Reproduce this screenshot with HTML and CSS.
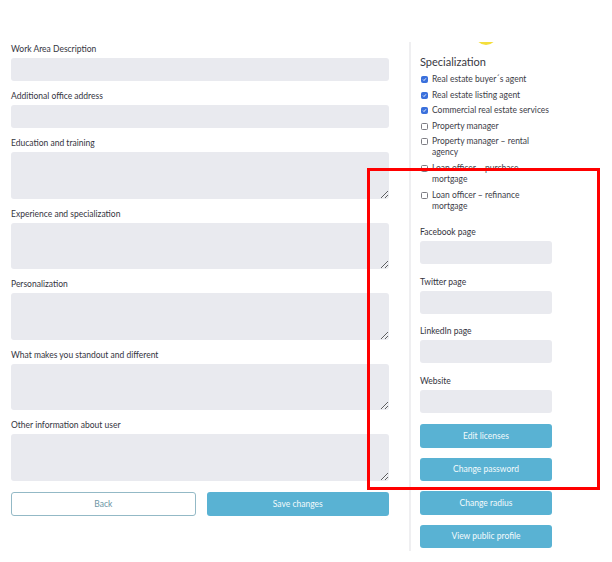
FILE: index.html
```html
<!DOCTYPE html>
<html lang="en">
<head>
    <meta charset="UTF-8">
    <meta name="viewport" content="width=device-width, initial-scale=1.0">
    <title>Edit profile</title>
    <link rel="stylesheet" href="styles.css">
</head>
<body>
    <div class="page">
        <form class="main-form">
            <div class="field">
                <label>Work Area Description</label>
                <input type="text">
            </div>
            <div class="field">
                <label>Additional office address</label>
                <input type="text">
            </div>
            <div class="field">
                <label>Education and training</label>
                <textarea></textarea>
            </div>
            <div class="field">
                <label>Experience and specialization</label>
                <textarea></textarea>
            </div>
            <div class="field">
                <label>Personalization</label>
                <textarea></textarea>
            </div>
            <div class="field">
                <label>What makes you standout and different</label>
                <textarea></textarea>
            </div>
            <div class="field">
                <label>Other information about user</label>
                <textarea></textarea>
            </div>
            <div class="form-actions">
                <button type="button" class="btn btn-outline">Back</button>
                <button type="button" class="btn">Save changes</button>
            </div>
        </form>

        <aside class="sidebar">
            <div class="avatar-peek"><div class="avatar"></div></div>
            <h3 class="side-title">Specialization</h3>
            <ul class="spec-list">
                <li><label class="check"><input type="checkbox" checked><span class="box"><svg viewBox="0 0 8 8"><path d="M1.7 4.1l1.5 1.5 3.1-3.5"/></svg></span><span>Real estate buyer´s agent</span></label></li>
                <li><label class="check"><input type="checkbox" checked><span class="box"><svg viewBox="0 0 8 8"><path d="M1.7 4.1l1.5 1.5 3.1-3.5"/></svg></span><span>Real estate listing agent</span></label></li>
                <li><label class="check"><input type="checkbox" checked><span class="box"><svg viewBox="0 0 8 8"><path d="M1.7 4.1l1.5 1.5 3.1-3.5"/></svg></span><span>Commercial real estate services</span></label></li>
                <li><label class="check"><input type="checkbox"><span class="box"></span><span>Property manager</span></label></li>
                <li><label class="check"><input type="checkbox"><span class="box"></span><span>Property manager – rental agency</span></label></li>
                <li><label class="check"><input type="checkbox"><span class="box"></span><span>Loan officer – purchase mortgage</span></label></li>
                <li><label class="check"><input type="checkbox"><span class="box"></span><span>Loan officer – refinance mortgage</span></label></li>
            </ul>

            <div class="social">
                <div class="field side-field">
                    <label>Facebook page</label>
                    <input type="text">
                </div>
                <div class="field side-field">
                    <label>Twitter page</label>
                    <input type="text">
                </div>
                <div class="field side-field">
                    <label>LinkedIn page</label>
                    <input type="text">
                </div>
                <div class="field side-field">
                    <label>Website</label>
                    <input type="text">
                </div>
            </div>

            <div class="side-actions">
                <button type="button" class="btn">Edit licenses</button>
                <button type="button" class="btn">Change password</button>
                <button type="button" class="btn">Change radius</button>
                <button type="button" class="btn">View public profile</button>
            </div>
        </aside>
    </div>

    <div class="highlight"></div>
</body>
</html>
```

FILE: styles.css
```css
* {
    margin: 0;
    padding: 0;
    box-sizing: border-box;
}

body {
    font-family: Lato, "Open Sans", sans-serif;
    background: #ffffff;
    color: #3d3d48;
    width: 612px;
    height: 562px;
    overflow: hidden;
}

.page {
    display: flex;
    padding-top: 42px;
}

/* left form */

.main-form {
    width: 378px;
    margin-left: 11px;
    margin-top: 1px;
    display: flex;
    flex-direction: column;
    gap: 9px;
}

.field {
    display: flex;
    flex-direction: column;
    gap: 3px;
}

.field label {
    font-size: 8.5px;
    line-height: 12px;
    color: #34343e;
}

.field input,
.field textarea {
    display: block;
    width: 100%;
    height: 23px;
    border: none;
    border-radius: 3px;
    background: #e9eaef;
    font-family: inherit;
    font-size: 9px;
}

.field textarea {
    height: 46.5px;
}

.form-actions {
    display: flex;
    gap: 11px;
    margin-top: 2px;
}

.form-actions .btn {
    flex: 1 1 0;
    height: 24px;
}

.btn {
    height: 23.5px;
    border: none;
    border-radius: 3px;
    background: #59b2d3;
    color: #f3fafc;
    font-family: inherit;
    font-size: 8.5px;
    cursor: pointer;
}

.btn-outline {
    background: #ffffff;
    border: 1px solid #93b9c6;
    color: #6b95a4;
}

/* right column */

.sidebar {
    margin-left: 20px;
    border-left: 2px solid #efeff1;
    padding: 0 0 3px 9px;
    width: 143px;
}

.avatar-peek {
    height: 4px;
    overflow: hidden;
    display: flex;
    justify-content: center;
}

.avatar {
    width: 22px;
    height: 22px;
    flex-shrink: 0;
    border-radius: 50%;
    background: #f4de3b;
    margin-top: -19px;
}

.side-title {
    font-size: 11px;
    line-height: 14px;
    font-weight: 400;
    color: #383842;
    margin-top: 9px;
}

.spec-list {
    list-style: none;
    margin-top: 5px;
    display: flex;
    flex-direction: column;
    gap: 4.6px;
    width: 132px;
}

.check {
    display: flex;
    align-items: flex-start;
    gap: 4px;
    font-size: 8.5px;
    line-height: 11px;
    color: #3d3d48;
}

.check input {
    display: none;
}

.box {
    width: 7px;
    height: 7px;
    margin: 2px 0 0 1px;
    flex-shrink: 0;
    border: 1px solid #7d7d84;
    border-radius: 1.5px;
    background: #ffffff;
    display: flex;
}

.box svg {
    width: 100%;
    height: 100%;
    fill: none;
    stroke: #ffffff;
    stroke-width: 1.4;
}

.check input:checked + .box {
    background: #3a70dc;
    border-color: #3a70dc;
}

.social {
    margin-top: 14.5px;
    display: flex;
    flex-direction: column;
    gap: 11.5px;
}

.side-field {
    gap: 3px;
}

.side-field input {
    width: 132px;
}

.side-actions {
    margin-top: 11.5px;
    display: flex;
    flex-direction: column;
    gap: 10px;
}

.side-actions .btn {
    width: 132px;
}

/* review annotation */

.highlight {
    position: absolute;
    left: 367px;
    top: 168px;
    width: 233px;
    height: 322px;
    border: 3px solid #ff0000;
}
```
